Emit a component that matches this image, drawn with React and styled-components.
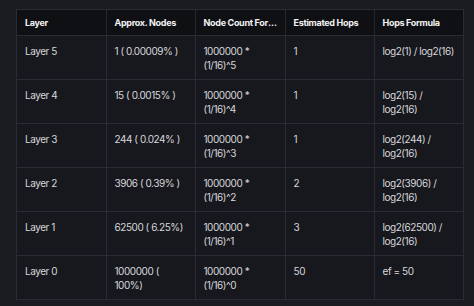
import styled, { createGlobalStyle } from 'styled-components';

const GlobalStyle = createGlobalStyle`
  html, body {
    margin: 0;
    padding: 0;
    background: #1b1c21;
  }
  body {
    font-family: Inter, "Noto Sans", sans-serif;
  }
`;

const Page = styled.div`
  width: 474px;
  height: 306px;
  padding: 9px 0 0 16px;
  box-sizing: border-box;
  background: #1b1c21;
`;

const Wrap = styled.div`
  width: 448px;
  border: 1px solid #2a2c33;
  box-sizing: border-box;
`;

const Table = styled.table`
  width: 100%;
  border-collapse: collapse;
  table-layout: fixed;
  background: #17181d;
`;

const Head = styled.th`
  background: #0f1013;
  color: #f2f2f4;
  font-size: 9px;
  font-weight: 700;
  letter-spacing: -0.3px;
  text-align: left;
  padding: 6px 7px 6px 8px;
  line-height: 13px;
  white-space: nowrap;
  overflow: hidden;
  text-overflow: ellipsis;
  border-right: 1px solid #24262c;
  border-bottom: 1px solid #2a2c33;
  &:last-child { border-right: none; }
`;

const Cell = styled.td`
  color: #d6d7db;
  font-size: 10px;
  letter-spacing: -0.45px;
  line-height: 14px;
  padding: 8px 7px 7px 8px;
  vertical-align: top;
  border-right: 1px solid #2a2c33;
  border-bottom: 1px solid #2a2c33;
  &:last-child { border-right: none; }
`;

const Row = styled.tr`
  &:last-child td { border-bottom: none; }
`;

const columns = ['Layer', 'Approx. Nodes', 'Node Count Formula', 'Estimated Hops', 'Hops Formula'];
const widths = [89, 89, 90, 89, 89];

const rows = [
  ['Layer 5', '1 ( 0.00009% )', '1000000 * (1/16)^5', '1', 'log2(1) / log2(16)'],
  ['Layer 4', '15 ( 0.0015% )', '1000000 * (1/16)^4', '1', 'log2(15) / log2(16)'],
  ['Layer 3', '244 ( 0.024% )', '1000000 * (1/16)^3', '1', 'log2(244) / log2(16)'],
  ['Layer 2', '3906 ( 0.39% )', '1000000 * (1/16)^2', '2', 'log2(3906) / log2(16)'],
  ['Layer 1', '62500 ( 6.25%)', '1000000 * (1/16)^1', '3', 'log2(62500) / log2(16)'],
  ['Layer 0', '1000000 ( 100%)', '1000000 * (1/16)^0', '50', 'ef = 50'],
];

export default function App() {
  return (
    <Page>
      <GlobalStyle />
      <Wrap>
        <Table>
          <colgroup>
            {widths.map((w, i) => <col key={i} style={{ width: w }} />)}
          </colgroup>
          <thead>
            <tr>
              {columns.map(c => <Head key={c}>{c}</Head>)}
            </tr>
          </thead>
          <tbody>
            {rows.map(r => (
              <Row key={r[0]}>
                {r.map((v, i) => <Cell key={i}>{v}</Cell>)}
              </Row>
            ))}
          </tbody>
        </Table>
      </Wrap>
    </Page>
  );
}
